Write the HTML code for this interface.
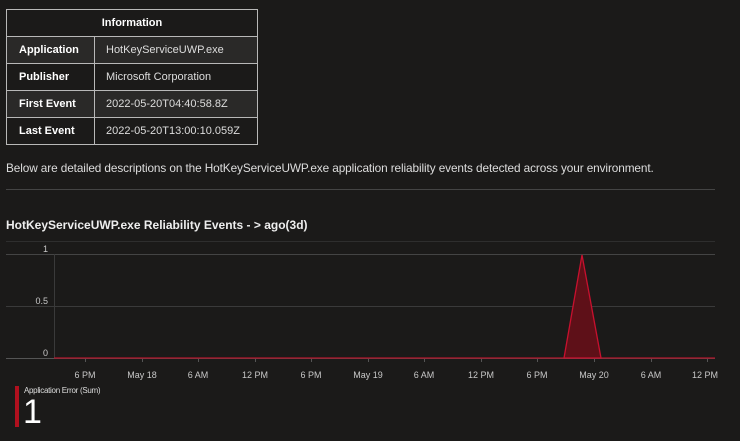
<!DOCTYPE html>
<html><head><meta charset="utf-8"><style>
*{margin:0;padding:0;box-sizing:border-box}
body{width:740px;height:441px;background:#1b1a19;color:#e8e8e8;font-family:"Liberation Sans",sans-serif;position:relative;overflow:hidden}
.a{position:absolute;white-space:nowrap}
table{position:absolute;left:6px;top:9px;border-collapse:collapse;font-size:11px;color:#ddd}
td,th{border:1px solid #b8b8b8;height:27px;padding:0 11px}
th{font-weight:bold;text-align:center;color:#fff}
td.k{font-weight:bold;color:#fff;width:88px;padding-left:12px}
td.v{width:163px}
tr.l td{background:#2a2928}
.tk{font-size:9px;color:#c8c8c8;top:370px;transform:translateX(-50%)}
.yl{font-size:9px;color:#c8c8c8;right:692px}
</style></head><body>
<table>
<tr><th colspan="2">Information</th></tr>
<tr class="l"><td class="k">Application</td><td class="v">HotKeyServiceUWP.exe</td></tr>
<tr><td class="k">Publisher</td><td class="v">Microsoft Corporation</td></tr>
<tr class="l"><td class="k">First Event</td><td class="v">2022-05-20T04:40:58.8Z</td></tr>
<tr><td class="k">Last Event</td><td class="v">2022-05-20T13:00:10.059Z</td></tr>
</table>
<div class="a" style="left:6px;top:161px;font-size:11.8px;color:#ddd;letter-spacing:-0.1px">Below are detailed descriptions on the HotKeyServiceUWP.exe application reliability events detected across your environment.</div>
<div class="a" style="left:6px;top:189px;width:709px;height:1px;background:#444"></div>
<div class="a" style="left:6px;top:218px;font-size:12px;font-weight:bold;color:#eee">HotKeyServiceUWP.exe Reliability Events - &gt; ago(3d)</div>
<div class="a" style="left:6px;top:241px;width:709px;height:1px;background:#2e2e2e"></div>
<svg class="a" style="left:0;top:0" width="740" height="441">
<line x1="6" y1="254.5" x2="715" y2="254.5" stroke="#444"/>
<line x1="6" y1="306.5" x2="715" y2="306.5" stroke="#3a3a3a"/>
<line x1="6" y1="358.5" x2="715" y2="358.5" stroke="#555"/>
<line x1="54.5" y1="254" x2="54.5" y2="358" stroke="#3a3a3a"/>
<g stroke="#555">
<line x1="85.5" y1="358" x2="85.5" y2="362"/><line x1="142.5" y1="358" x2="142.5" y2="362"/><line x1="198.5" y1="358" x2="198.5" y2="362"/><line x1="255.5" y1="358" x2="255.5" y2="362"/><line x1="311.5" y1="358" x2="311.5" y2="362"/><line x1="368.5" y1="358" x2="368.5" y2="362"/><line x1="424.5" y1="358" x2="424.5" y2="362"/><line x1="481.5" y1="358" x2="481.5" y2="362"/><line x1="537.5" y1="358" x2="537.5" y2="362"/><line x1="594.5" y1="358" x2="594.5" y2="362"/><line x1="651.5" y1="358" x2="651.5" y2="362"/><line x1="707.5" y1="358" x2="707.5" y2="362"/>
</g>
<line x1="54" y1="358" x2="715" y2="358" stroke="#b0142a" stroke-width="1.2"/>
<polygon points="564,358 582,255 601,358" fill="#5e1018" stroke="#c8102e" stroke-width="1.3"/>
<rect x="15" y="386" width="4" height="41" fill="#b0101e"/>
</svg>
<div class="a yl" style="top:244px">1</div>
<div class="a yl" style="top:296px">0.5</div>
<div class="a yl" style="top:348px">0</div>
<div class="a tk" style="left:85px">6 PM</div>
<div class="a tk" style="left:142px">May 18</div>
<div class="a tk" style="left:198px">6 AM</div>
<div class="a tk" style="left:255px">12 PM</div>
<div class="a tk" style="left:311px">6 PM</div>
<div class="a tk" style="left:368px">May 19</div>
<div class="a tk" style="left:424px">6 AM</div>
<div class="a tk" style="left:481px">12 PM</div>
<div class="a tk" style="left:537px">6 PM</div>
<div class="a tk" style="left:594px">May 20</div>
<div class="a tk" style="left:651px">6 AM</div>
<div class="a tk" style="left:705px">12 PM</div>
<div class="a" style="left:24px;top:386px;font-size:8px;color:#ddd;letter-spacing:-0.3px">Application Error (Sum)</div>
<div class="a" style="left:23px;top:393px;font-size:34px;color:#fff;line-height:38px">1</div>
</body></html>
